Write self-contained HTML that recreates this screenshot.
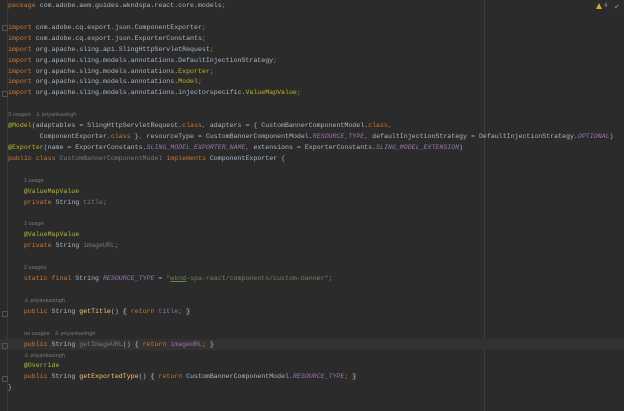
<!DOCTYPE html>
<html><head><meta charset="utf-8"><style>
html,body{margin:0;padding:0;width:624px;height:411px;overflow:hidden;background:#2b2b2b;}
.ed{position:absolute;left:0;top:0;width:624px;height:411px;background:#2b2b2b;}
.gut{position:absolute;left:0;top:0;width:7px;height:411px;background:#2b2b2b;border-right:1px solid #3a3a3a;}
.guide{position:absolute;left:484px;top:0;width:1px;height:411px;background:#3c3c3c;}
.cur{position:absolute;left:0;top:339px;width:624px;height:11px;background:#323232;}
pre{position:absolute;left:8px;top:1px;margin:0;font-family:"Liberation Mono",monospace;font-size:6.6px;line-height:10.92px;color:#a9b7c6;white-space:pre;}
.k{color:#cc7832}.a{color:#bbb529}.c{color:#9876aa;font-style:italic}.g{color:#7a7a7a}.s{color:#6a8759}.f{color:#ffc66d}
.h{font-family:"Liberation Sans",sans-serif;font-size:5.6px;color:#787878}
.b{background:#3a3a3a}
.fold{position:absolute;left:2px;width:4px;height:4px;border:1px solid #555;border-radius:1px}
.warn{position:absolute;left:604px;top:3px;font-family:"Liberation Sans",sans-serif;font-size:6px;color:#999}
.tri{position:absolute;left:596px;top:3px;width:0;height:0;border-left:3.5px solid transparent;border-right:3.5px solid transparent;border-bottom:6px solid #d9a72c}
.ok{position:absolute;left:614px;top:3px;color:#5c9a4b;font-size:7px;font-family:"DejaVu Sans",sans-serif}
</style></head><body><div class="ed">
<div class="gut"></div><div class="guide"></div><div class="cur"></div>
<div class="fold" style="top:25px"></div><div class="fold" style="top:91px"></div>
<div class="fold" style="top:311px"></div><div class="fold" style="top:343px"></div><div class="fold" style="top:376px"></div>
<div class="tri"></div><div class="warn">4</div><div class="ok">✔</div>
<pre><span class="k">package</span> com.adobe.aem.guides.wkndspa.react.core.models<span class="k">;</span>

<span class="k">import</span> com.adobe.cq.export.json.ComponentExporter<span class="k">;</span>
<span class="k">import</span> com.adobe.cq.export.json.ExporterConstants<span class="k">;</span>
<span class="k">import</span> org.apache.sling.api.SlingHttpServletRequest<span class="k">;</span>
<span class="k">import</span> org.apache.sling.models.annotations.DefaultInjectionStrategy<span class="k">;</span>
<span class="k">import</span> org.apache.sling.models.annotations.<span class="a">Exporter</span><span class="k">;</span>
<span class="k">import</span> org.apache.sling.models.annotations.<span class="a">Model</span><span class="k">;</span>
<span class="k">import</span> org.apache.sling.models.annotations.injectorspecific.<span class="a">ValueMapValue</span><span class="k">;</span>

<span class="h">3 usages &nbsp;&nbsp;♙ priyankasingh</span>
<span class="a">@Model</span>(adaptables = SlingHttpServletRequest.<span class="k">class,</span> adapters = { CustomBannerComponentModel.<span class="k">class,</span>
        ComponentExporter.<span class="k">class</span> }<span class="k">,</span> resourceType = CustomBannerComponentModel.<span class="c">RESOURCE_TYPE</span><span class="k">,</span> defaultInjectionStrategy = DefaultInjectionStrategy.<span class="c">OPTIONAL</span>)
<span class="a">@Exporter</span>(name = ExporterConstants.<span class="c">SLING_MODEL_EXPORTER_NAME</span><span class="k">,</span> extensions = ExporterConstants.<span class="c">SLING_MODEL_EXTENSION</span>)
<span class="k">public class</span> <span class="g">CustomBannerComponentModel</span> <span class="k">implements</span> ComponentExporter {

    <span class="h">1 usage</span>
    <span class="a">@ValueMapValue</span>
    <span class="k">private</span> String <span class="g">title</span><span class="k">;</span>

    <span class="h">1 usage</span>
    <span class="a">@ValueMapValue</span>
    <span class="k">private</span> String <span class="g">imageURL</span><span class="k">;</span>

    <span class="h">2 usages</span>
    <span class="k">static final</span> String <span class="c">RESOURCE_TYPE</span> = <span class="s">"<u>wknd</u>-spa-react/components/custom-banner"</span><span class="k">;</span>

    <span class="h">♙ priyankasingh</span>
    <span class="k">public</span> String <span class="f">getTitle</span>() <span class="b">{</span> <span class="k">return</span> <span class="c" style="font-style:normal">title</span><span class="k">;</span> <span class="b">}</span>

    <span class="h">no usages &nbsp;&nbsp;♙ priyankasingh</span>
    <span class="k">public</span> String <span class="g">getImageURL</span>() <span class="b">{</span> <span class="k">return</span> <span class="c" style="font-style:normal">imageURL</span><span class="k">;</span> <span class="b">}</span>
    <span class="h">♙ priyankasingh</span>
    <span class="a">@Override</span>
    <span class="k">public</span> String <span class="f">getExportedType</span>() <span class="b">{</span> <span class="k">return</span> CustomBannerComponentModel.<span class="c">RESOURCE_TYPE</span><span class="k">;</span> <span class="b">}</span>
}</pre>
</div></body></html>
